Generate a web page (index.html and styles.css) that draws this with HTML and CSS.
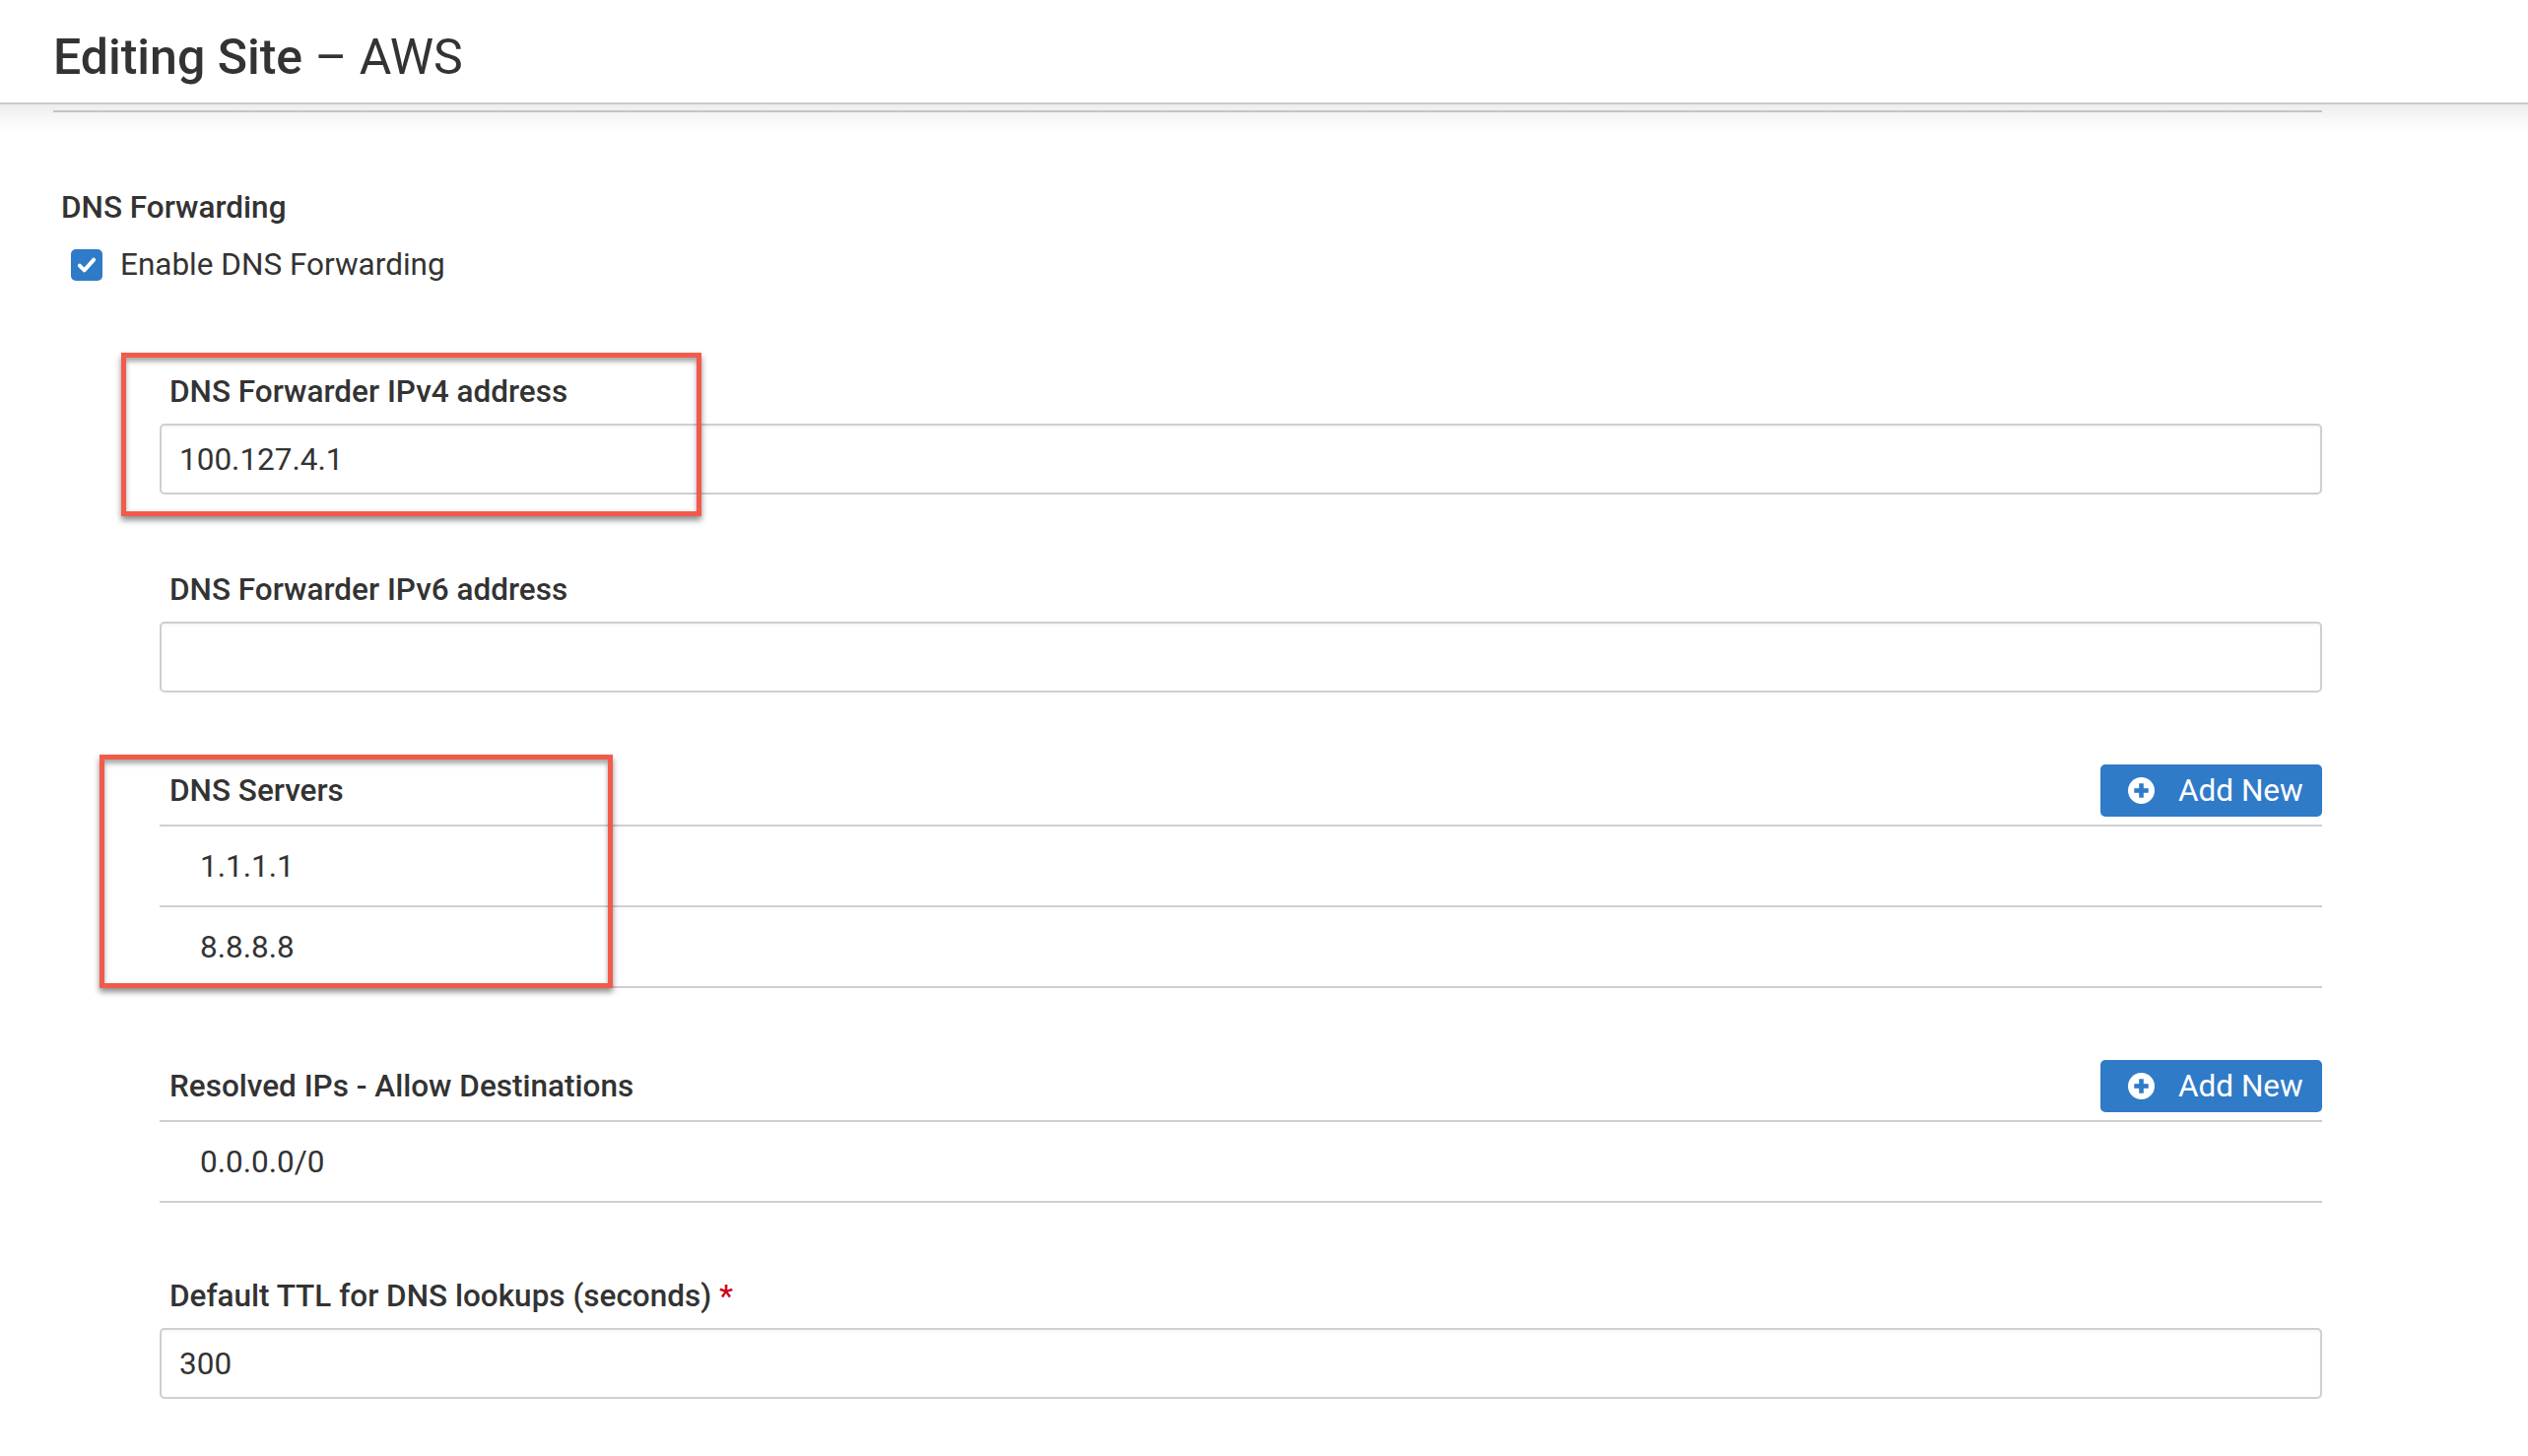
FILE: index.html
```html
<!DOCTYPE html>
<html lang="en">
<head>
<meta charset="utf-8">
<title>Editing Site – AWS</title>
<link rel="stylesheet" href="styles.css">
</head>
<body>
<header class="topbar">
  <h1 class="title"><span class="title-main">Editing Site</span> <span class="title-sub">– AWS</span></h1>
</header>
<main class="content">
  <div class="rule"></div>

  <section class="group">
    <h2 class="group-title">DNS Forwarding</h2>
    <label class="check">
      <span class="check-box">
        <svg viewBox="0 0 20 20" width="24" height="24"><path d="M4 10.5l4 4 8-9" fill="none" stroke="#fff" stroke-width="3.2" stroke-linecap="round" stroke-linejoin="round"/></svg>
      </span>
      <span class="check-text">Enable DNS Forwarding</span>
    </label>
  </section>

  <div class="fields">
    <div class="field field-first">
      <label class="field-label">DNS Forwarder IPv4 address</label>
      <div class="input">100.127.4.1</div>
    </div>

    <div class="field">
      <label class="field-label">DNS Forwarder IPv6 address</label>
      <div class="input"></div>
    </div>

    <div class="list">
      <div class="list-head">
        <span class="field-label">DNS Servers</span>
        <button class="btn">
          <svg class="btn-icon" viewBox="0 0 28 28" width="27" height="27"><circle cx="14" cy="14" r="14" fill="#fff"/><rect x="11.6" y="6.5" width="4.8" height="15" fill="#2f7bc8"/><rect x="6.5" y="11.6" width="15" height="4.8" fill="#2f7bc8"/></svg>
          <span>Add New</span>
        </button>
      </div>
      <div class="list-row">1.1.1.1</div>
      <div class="list-row">8.8.8.8</div>
    </div>

    <div class="list">
      <div class="list-head">
        <span class="field-label">Resolved IPs - Allow Destinations</span>
        <button class="btn">
          <svg class="btn-icon" viewBox="0 0 28 28" width="27" height="27"><circle cx="14" cy="14" r="14" fill="#fff"/><rect x="11.6" y="6.5" width="4.8" height="15" fill="#2f7bc8"/><rect x="6.5" y="11.6" width="15" height="4.8" fill="#2f7bc8"/></svg>
          <span>Add New</span>
        </button>
      </div>
      <div class="list-row">0.0.0.0/0</div>
    </div>

    <div class="field field-ttl">
      <label class="field-label">Default TTL for DNS lookups (seconds) <span class="req">*</span></label>
      <div class="input">300</div>
    </div>
  </div>
</main>

<div class="callout callout-ipv4"></div>
<div class="callout callout-dns"></div>
</body>
</html>
```
FILE: styles.css
```css
* { box-sizing: border-box; }
html, body { margin: 0; padding: 0; background: #fff; }
body {
  font-family: Roboto, "Liberation Sans", Arial, sans-serif;
  color: #333;
  font-size: 31.5px;
  width: 2566px;
  min-height: 1478px;
  position: relative;
  overflow: hidden;
}

.topbar {
  height: 106px;
  border-bottom: 2px solid #c9c9c9;
  padding-left: 54px;
  padding-top: 12px;
  display: flex;
  align-items: center;
  background: #fff;
  position: relative;
  z-index: 1;
}
.title {
  margin: 0;
  font-size: 50px;
  line-height: 1;
  color: #333;
  font-weight: 400;
}
.title-main { font-weight: 500; }
.title-sub { font-weight: 400; }

.content {
  padding: 0 209px 40px 54px;
  background: linear-gradient(#ececec 0, #f7f7f7 14px, #fff 30px);
}
.rule {
  height: 2px;
  background: #c4c4c4;
  position: relative;
  top: 6px;
}

.group { padding: 83px 0 0 8px; }
.group-title {
  margin: 0;
  font-size: 31.5px;
  font-weight: 500;
  line-height: 40px;
}
.check {
  display: flex;
  align-items: center;
  gap: 18px;
  margin-top: 18px;
  padding-left: 10px;
  line-height: 40px;
}
.check-box {
  width: 32px;
  height: 32px;
  border-radius: 5px;
  background: #2f7bc8;
  display: flex;
  align-items: center;
  justify-content: center;
}
.check-text { font-weight: 400; }

.fields { padding-left: 108px; }

.field { margin-top: 77px; }
.field-first { margin-top: 89px; }
.field-ttl { margin-top: 75px; }

.field-label {
  display: block;
  font-weight: 500;
  line-height: 40px;
  padding-left: 10px;
  font-size: 31.5px;
}
.req { color: #d0021b; }

.input {
  margin-top: 12px;
  height: 72px;
  border: 2px solid #cfcfcf;
  border-radius: 5px;
  padding: 0 18px;
  display: flex;
  align-items: center;
  font-size: 31.5px;
  box-shadow: inset 0 2px 3px rgba(0,0,0,0.04);
}

.list { margin-top: 73px; }
.list-head {
  display: flex;
  justify-content: space-between;
  align-items: center;
  padding-bottom: 8px;
  border-bottom: 2px solid #cfcfcf;
}
.btn {
  height: 53px;
  width: 225px;
  background: #2f7bc8;
  color: #fff;
  border: none;
  border-radius: 5px;
  font-family: inherit;
  font-size: 31.5px;
  display: flex;
  align-items: center;
  gap: 24px;
  padding: 0 0 0 28px;
  cursor: pointer;
}
.btn-icon { display: block; }

.list-row {
  height: 82px;
  border-bottom: 2px solid #cfcfcf;
  display: flex;
  align-items: center;
  padding-left: 41px;
  font-size: 31.5px;
}

.callout {
  position: absolute;
  border: 5px solid #f25a4b;
  box-shadow: 0 4px 6px rgba(0,0,0,0.45), inset 0 4px 5px rgba(0,0,0,0.35);
  pointer-events: none;
}
.callout-ipv4 { left: 123px; top: 358px; width: 589px; height: 166px; }
.callout-dns { left: 101px; top: 766px; width: 521px; height: 237px; }
```
